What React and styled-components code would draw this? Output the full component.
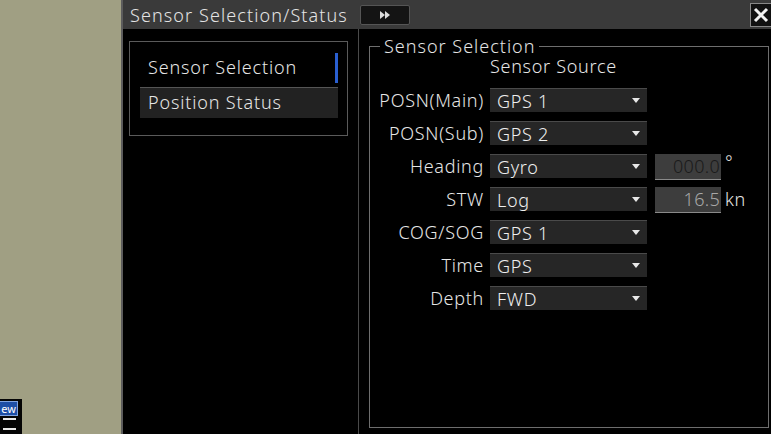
import styled, { createGlobalStyle } from "styled-components";

const GlobalStyle = createGlobalStyle`
  html, body {
    margin: 0;
    padding: 0;
    background: #000;
    overflow: hidden;
  }
  * { box-sizing: border-box; }
`;

const Page = styled.div`
  display: flex;
  width: 771px;
  height: 434px;
  font-family: "Noto Sans", "Open Sans", sans-serif;
  font-weight: 300;
  font-size: 18px;
  letter-spacing: 0.7px;
  color: #e6e6e6;
`;

const SideStrip = styled.div`
  width: 121px;
  background: #a09f83;
  display: flex;
  flex-direction: column;
  justify-content: flex-end;
`;

const MiniPanel = styled.div`
  width: 22px;
  height: 35px;
  background: #050505;
  padding-top: 2px;
  display: flex;
  flex-direction: column;
`;

const MiniButton = styled.div`
  width: 18px;
  height: 15px;
  background: #1d4ea6;
  border: 1px solid #7fa3e0;
  border-left: none;
  color: #fff;
  font-size: 11px;
  font-weight: 400;
  letter-spacing: 0;
  line-height: 13px;
  text-align: right;
  padding-right: 1px;
`;

const MiniLine = styled.div`
  width: 13px;
  height: 2px;
  margin-left: 3px;
  margin-top: ${(p) => p.$gap}px;
  background: #e8e8e8;
`;

const Window = styled.div`
  flex: 1;
  display: flex;
  flex-direction: column;
  border-left: 2px solid #5c5c5c;
  background: #000;
`;

const TitleBar = styled.div`
  height: 29px;
  background: #3a3a3a;
  display: flex;
  align-items: center;
  padding-left: 7px;
`;

const Title = styled.span`
  color: #e4e4e4;
  letter-spacing: 1.1px;
`;

const SkipButton = styled.div`
  width: 50px;
  height: 20px;
  margin-left: 12px;
  background: #141414;
  border: 1px solid #555;
  border-radius: 2px;
  display: flex;
  align-items: center;
  justify-content: center;
`;

const CloseButton = styled.div`
  margin-left: auto;
  width: 21px;
  height: 24px;
  background: #111;
  border: 1px solid #888;
  border-right: none;
  display: flex;
  align-items: center;
  justify-content: center;
`;

const Body = styled.div`
  flex: 1;
  display: flex;
`;

const LeftPane = styled.div`
  width: 236px;
  border-right: 1px solid #4a4a4a;
  padding: 12px 10px 0 6px;
`;

const MenuBox = styled.div`
  height: 95px;
  border: 1px solid #5a5a5a;
  padding: 11px 9px 0 10px;
`;

const MenuItem = styled.div`
  position: relative;
  height: ${(p) => (p.$first ? "34px" : "31px")};
  padding-left: 8px;
  padding-bottom: ${(p) => (p.$first ? "6px" : "2px")};
  display: flex;
  align-items: center;
  letter-spacing: 0.85px;
  background: ${(p) => (p.$shaded ? "#222" : "transparent")};
  border-top: ${(p) => (p.$shaded ? "1px solid #555" : "none")};
`;

const ScrollMark = styled.div`
  position: absolute;
  right: 0;
  top: 0;
  width: 3px;
  height: 30px;
  background: #2a5fd0;
`;

const RightPane = styled.div`
  flex: 1;
  padding: 8px 2px 6px 10px;
  display: flex;
`;

const Group = styled.fieldset`
  flex: 1;
  margin: 0;
  padding: 0;
  border: 1px solid #6e6e6e;
  min-width: 0;
`;

const Legend = styled.legend`
  margin-left: 10px;
  padding: 0 4px;
  line-height: 18px;
  letter-spacing: 1px;
  color: #e4e4e4;
`;

const Grid = styled.div`
  display: grid;
  grid-template-columns: 114px 157px 68px auto;
  grid-auto-rows: 24px;
  column-gap: 6px;
  row-gap: 9px;
  align-items: center;
`;

const ColumnHead = styled.div`
  grid-column: 2 / span 3;
  line-height: 24px;
  margin-top: -2px;
`;

const Label = styled.div`
  grid-column: 1;
  text-align: right;
  white-space: nowrap;
`;

const Select = styled.div`
  grid-column: 2;
  height: 24px;
  background: #262626;
  border-top: 1px solid #4a4a4a;
  display: flex;
  align-items: center;
  justify-content: space-between;
  padding: 0 7px;
  color: #efefef;
`;

const ValueBox = styled.div`
  grid-column: 3;
  align-self: start;
  height: 26px;
  margin-left: 2px;
  background: #3d3d3d;
  border-bottom: 1px solid #8a8a8a;
  text-align: right;
  padding-right: 1px;
  line-height: 25px;
  letter-spacing: 0.3px;
  color: ${(p) => (p.$dim ? "#1a1a1a" : "#a8a8a8")};
`;

const Unit = styled.div`
  grid-column: 4;
  margin-left: -2px;
  margin-top: ${(p) => (p.$sup ? "-8px" : "0")};
`;

const Arrow = () => (
  <svg width="8" height="5" viewBox="0 0 8 5">
    <polygon points="0,0 8,0 4,5" fill="#e8e8e8" />
  </svg>
);

const rows = [
  { label: "POSN(Main)", value: "GPS 1" },
  { label: "POSN(Sub)", value: "GPS 2" },
  { label: "Heading", value: "Gyro", box: "000.0", unit: "°", dim: true },
  { label: "STW", value: "Log", box: "16.5", unit: "kn" },
  { label: "COG/SOG", value: "GPS 1" },
  { label: "Time", value: "GPS" },
  { label: "Depth", value: "FWD" },
];

const Row = ({ row }) => (
  <>
    <Label>{row.label}</Label>
    <Select>
      <span>{row.value}</span>
      <Arrow />
    </Select>
    {row.box ? <ValueBox $dim={row.dim}>{row.box}</ValueBox> : <div />}
    {row.unit ? <Unit $sup={row.unit === "°"}>{row.unit}</Unit> : <div />}
  </>
);

export default function App() {
  return (
    <Page>
      <GlobalStyle />
      <SideStrip>
        <MiniPanel>
          <MiniButton>ew</MiniButton>
          <MiniLine $gap={2} />
          <MiniLine $gap={8} />
        </MiniPanel>
      </SideStrip>
      <Window>
        <TitleBar>
          <Title>Sensor Selection/Status</Title>
          <SkipButton>
            <svg width="10" height="8" viewBox="0 0 10 8">
              <polygon points="0,0 5,4 0,8" fill="#ddd" />
              <polygon points="5,0 10,4 5,8" fill="#ddd" />
            </svg>
          </SkipButton>
          <CloseButton>
            <svg width="16" height="16" viewBox="0 0 16 16">
              <path d="M2 2 L14 14 M14 2 L2 14" stroke="#f2f2f2" strokeWidth="3" />
            </svg>
          </CloseButton>
        </TitleBar>
        <Body>
          <LeftPane>
            <MenuBox>
              <MenuItem $first>
                Sensor Selection
                <ScrollMark />
              </MenuItem>
              <MenuItem $shaded>Position Status</MenuItem>
            </MenuBox>
          </LeftPane>
          <RightPane>
            <Group>
              <Legend>Sensor Selection</Legend>
              <Grid>
                <ColumnHead>Sensor Source</ColumnHead>
                {rows.map((r) => (
                  <Row key={r.label} row={r} />
                ))}
              </Grid>
            </Group>
          </RightPane>
        </Body>
      </Window>
    </Page>
  );
}
